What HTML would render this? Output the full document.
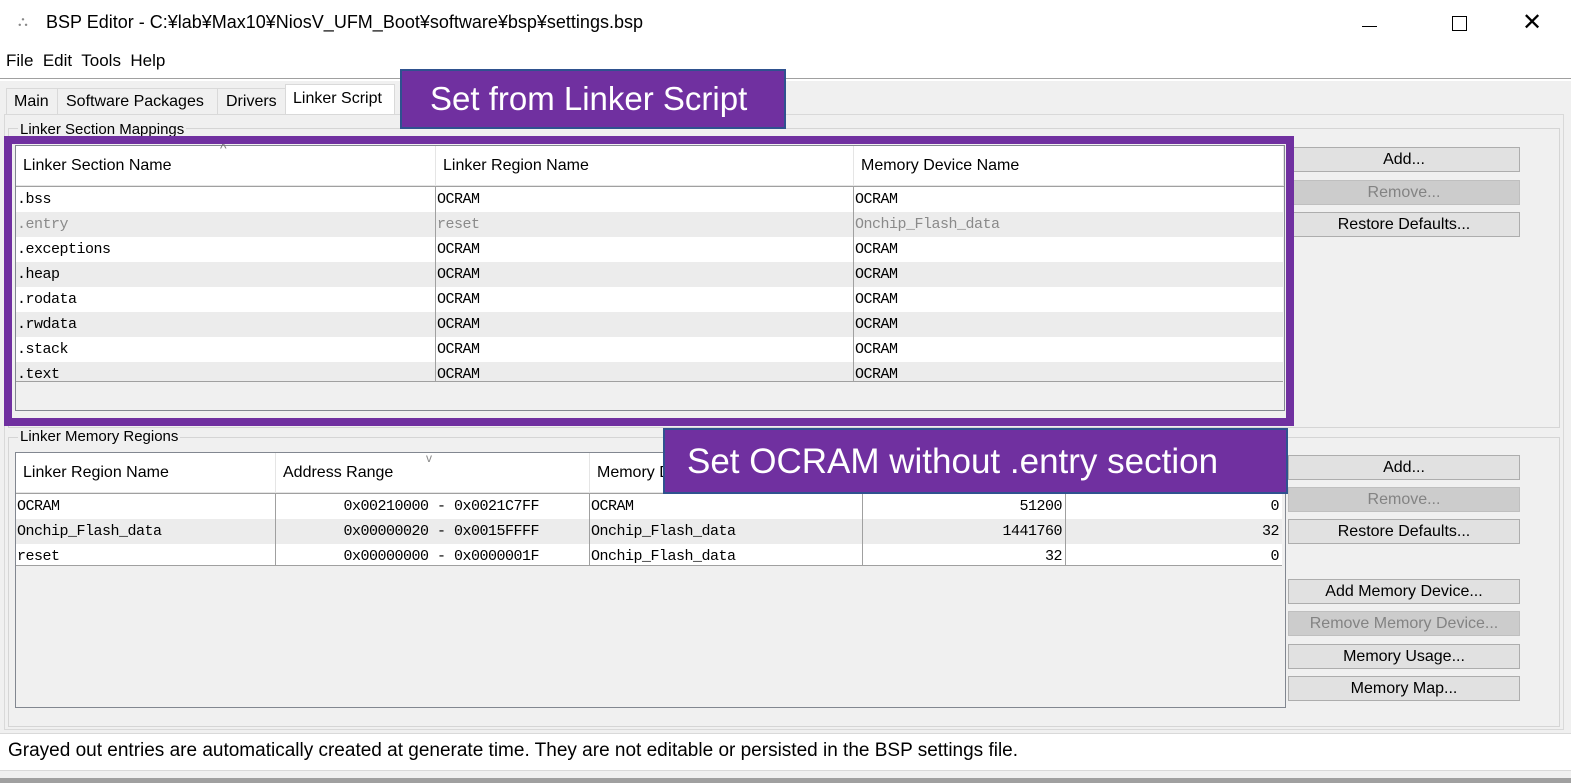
<!DOCTYPE html>
<html><head><meta charset="utf-8"><style>
*{margin:0;padding:0;box-sizing:border-box}
body{width:1571px;height:783px;background:#f0f0f0;position:relative;overflow:hidden;font-family:"Liberation Sans",sans-serif;font-size:16px;color:#000}
.a{position:absolute}
.mono{font-family:"Liberation Mono","DejaVu Sans Mono",monospace;font-size:15px;letter-spacing:-0.5px}
.btn{position:absolute;left:1288px;width:232px;height:25px;background:#e1e1e1;border:1px solid #adadad;text-align:center;line-height:23px;font-size:16px}
.dis{background:#cccccc;color:#838383;border-color:#bfbfbf}
.tbl{position:absolute;background:#f0f0f0;border:1px solid #828790}
.hdr{position:absolute;top:0;height:40px;background:#fff;border-right:1px solid #e5e5e5;padding-left:7px;line-height:40px;border-bottom:1px solid #e5e5e5}
.row{position:absolute;left:0;height:25px;line-height:25px}
.cell{position:absolute;top:0;height:25px;border-left:1px solid #a0a0a0;padding-left:1px;white-space:nowrap}
.purple{position:absolute;background:#7030a0;border:2px solid #2f528f;color:#fff;font-family:"Liberation Sans",sans-serif;font-size:33px;white-space:nowrap}
</style></head><body>
<div class="a" style="left:0;top:0;width:1571px;height:80px;background:#fff"></div>
<div class="a" style="left:18px;top:13px;font-size:14px;color:#888">⛬</div>
<div class="a" style="left:46px;top:12px;font-size:18px">BSP Editor - C:¥lab¥Max10¥NiosV_UFM_Boot¥software¥bsp¥settings.bsp</div>
<div class="a" style="left:1362px;top:26px;width:15px;height:1px;background:#000"></div>
<div class="a" style="left:1452px;top:16px;width:15px;height:15px;border:1px solid #000"></div>
<div class="a" style="left:1522px;top:8px;font-size:24px;font-weight:200">✕</div>
<div class="a" style="left:6px;top:51px;font-size:17px">File&nbsp; Edit&nbsp; Tools&nbsp; Help</div>
<div class="a" style="left:0;top:78px;width:1571px;height:3px;border-top:1px solid #a0a0a0;border-bottom:1px solid #fff"></div>
<!-- tabs -->
<div class="a" style="left:6px;top:88px;height:26px;width:280px;border:1px solid #d9d9d9;border-bottom:none;background:#f0f0f0"></div>
<div class="a" style="left:14px;top:93px">Main</div>
<div class="a" style="left:57px;top:88px;height:26px;border-left:1px solid #d9d9d9"></div>
<div class="a" style="left:66px;top:93px">Software Packages</div>
<div class="a" style="left:217px;top:88px;height:26px;border-left:1px solid #d9d9d9"></div>
<div class="a" style="left:226px;top:93px">Drivers</div>
<div class="a" style="left:285px;top:84px;width:110px;height:31px;background:#fff;border:1px solid #d9d9d9;border-bottom:none"></div>
<div class="a" style="left:293px;top:90px">Linker Script</div>
<div class="a" style="left:4px;top:114px;width:1560px;height:616px;border:1px solid #d9d9d9;background:#f0f0f0"></div>
<div class="a" style="left:8px;top:128px;width:1552px;height:300px;border:1px solid #d5d5d5"></div>
<div class="a" style="left:18px;top:121px;font-size:15px;background:#f0f0f0;padding:0 2px">Linker Section Mappings</div>
<!-- table1 -->
<div class="tbl" style="left:15px;top:145px;width:1270px;height:266px">
 <div class="hdr" style="left:0;width:420px">Linker Section Name</div>
 <div class="a" style="left:204px;top:-6px;font-size:14px;color:#777">^</div>
 <div class="hdr" style="left:420px;width:418px">Linker Region Name</div>
 <div class="hdr" style="left:838px;width:430px">Memory Device Name</div>
 <div class="a" style="left:0;top:40px;width:1268px;border-top:1px solid #a0a0a0"></div>
</div>
<div class="a mono" style="left:16px;top:187px;width:1267px">
 <div class="row" style="top:0;width:1267px;background:#fff"><div class="cell" style="left:0;border:none">.bss</div><div class="cell" style="left:419px">OCRAM</div><div class="cell" style="left:837px">OCRAM</div></div>
 <div class="row" style="top:25px;width:1267px;background:#ececec;color:#8a8a8a"><div class="cell" style="left:0;border:none">.entry</div><div class="cell" style="left:419px">reset</div><div class="cell" style="left:837px">Onchip_Flash_data</div></div>
 <div class="row" style="top:50px;width:1267px;background:#fff"><div class="cell" style="left:0;border:none">.exceptions</div><div class="cell" style="left:419px">OCRAM</div><div class="cell" style="left:837px">OCRAM</div></div>
 <div class="row" style="top:75px;width:1267px;background:#ececec"><div class="cell" style="left:0;border:none">.heap</div><div class="cell" style="left:419px">OCRAM</div><div class="cell" style="left:837px">OCRAM</div></div>
 <div class="row" style="top:100px;width:1267px;background:#fff"><div class="cell" style="left:0;border:none">.rodata</div><div class="cell" style="left:419px">OCRAM</div><div class="cell" style="left:837px">OCRAM</div></div>
 <div class="row" style="top:125px;width:1267px;background:#ececec"><div class="cell" style="left:0;border:none">.rwdata</div><div class="cell" style="left:419px">OCRAM</div><div class="cell" style="left:837px">OCRAM</div></div>
 <div class="row" style="top:150px;width:1267px;background:#fff"><div class="cell" style="left:0;border:none">.stack</div><div class="cell" style="left:419px">OCRAM</div><div class="cell" style="left:837px">OCRAM</div></div>
 <div class="row" style="top:175px;width:1267px;height:20px;background:#ececec;border-bottom:1px solid #a0a0a0;overflow:hidden"><div class="cell" style="left:0;border:none">.text</div><div class="cell" style="left:419px">OCRAM</div><div class="cell" style="left:837px">OCRAM</div></div>
</div>
<div class="btn" style="top:147px">Add...</div>
<div class="btn dis" style="top:180px">Remove...</div>
<div class="btn" style="top:212px">Restore Defaults...</div>
<!-- purple outline -->
<div class="a" style="left:4px;top:136px;width:1290px;height:290px;border:8px solid #7030a0"></div>
<div class="purple" style="left:400px;top:69px;width:386px;height:60px;padding-left:28px;line-height:56px">Set from Linker Script</div>
<!-- group2 -->
<div class="a" style="left:8px;top:437px;width:1552px;height:290px;border:1px solid #d5d5d5"></div>
<div class="a" style="left:18px;top:428px;font-size:15px;background:#f0f0f0;padding:0 2px">Linker Memory Regions</div>
<div class="tbl" style="left:15px;top:452px;width:1271px;height:256px">
 <div class="hdr" style="left:0;width:260px">Linker Region Name</div>
 <div class="hdr" style="left:260px;width:314px">Address Range</div>
 <div class="a" style="left:410px;top:-2px;font-size:12px;color:#888">v</div>
 <div class="hdr" style="left:574px;width:273px">Memory Device Name</div>
 <div class="hdr" style="left:847px;width:203px"></div>
 <div class="hdr" style="left:1050px;width:219px"></div>
 <div class="a" style="left:0;top:40px;width:1269px;border-top:1px solid #a0a0a0"></div>
</div>
<div class="a mono" style="left:16px;top:494px;width:1266px">
 <div class="row" style="top:0;width:1266px;background:#fff"><div class="cell" style="left:0;border:none">OCRAM</div><div class="cell" style="left:259px;width:314px;text-align:right;padding-right:50px">0x00210000 - 0x0021C7FF</div><div class="cell" style="left:573px">OCRAM</div><div class="cell" style="left:846px;width:203px;text-align:right;padding-right:3px">51200</div><div class="cell" style="left:1049px;width:217px;text-align:right;padding-right:3px">0</div></div>
 <div class="row" style="top:25px;width:1266px;background:#ececec"><div class="cell" style="left:0;border:none">Onchip_Flash_data</div><div class="cell" style="left:259px;width:314px;text-align:right;padding-right:50px">0x00000020 - 0x0015FFFF</div><div class="cell" style="left:573px">Onchip_Flash_data</div><div class="cell" style="left:846px;width:203px;text-align:right;padding-right:3px">1441760</div><div class="cell" style="left:1049px;width:217px;text-align:right;padding-right:3px">32</div></div>
 <div class="row" style="top:50px;width:1266px;height:22px;background:#fff;border-bottom:1px solid #a0a0a0;overflow:hidden"><div class="cell" style="left:0;border:none">reset</div><div class="cell" style="left:259px;width:314px;text-align:right;padding-right:50px">0x00000000 - 0x0000001F</div><div class="cell" style="left:573px">Onchip_Flash_data</div><div class="cell" style="left:846px;width:203px;text-align:right;padding-right:3px">32</div><div class="cell" style="left:1049px;width:217px;text-align:right;padding-right:3px">0</div></div>
</div>
<div class="btn" style="top:455px">Add...</div>
<div class="btn dis" style="top:487px">Remove...</div>
<div class="btn" style="top:519px">Restore Defaults...</div>
<div class="btn" style="top:579px">Add Memory Device...</div>
<div class="btn dis" style="top:611px">Remove Memory Device...</div>
<div class="btn" style="top:644px">Memory Usage...</div>
<div class="btn" style="top:676px">Memory Map...</div>
<div class="purple" style="left:663px;top:428px;width:625px;height:66px;padding-left:22px;line-height:64px;font-size:35px">Set OCRAM without .entry section</div>
<!-- status -->
<div class="a" style="left:0;top:733px;width:1571px;height:38px;background:#fff;border-top:1px solid #d9d9d9;border-bottom:1px solid #d9d9d9"></div>
<div class="a" style="left:8px;top:740px;font-size:19px">Grayed out entries are automatically created at generate time. They are not editable or persisted in the BSP settings file.</div>
<div class="a" style="left:0;top:778px;width:1571px;height:5px;background:#a0a0a0"></div>
</body></html>
